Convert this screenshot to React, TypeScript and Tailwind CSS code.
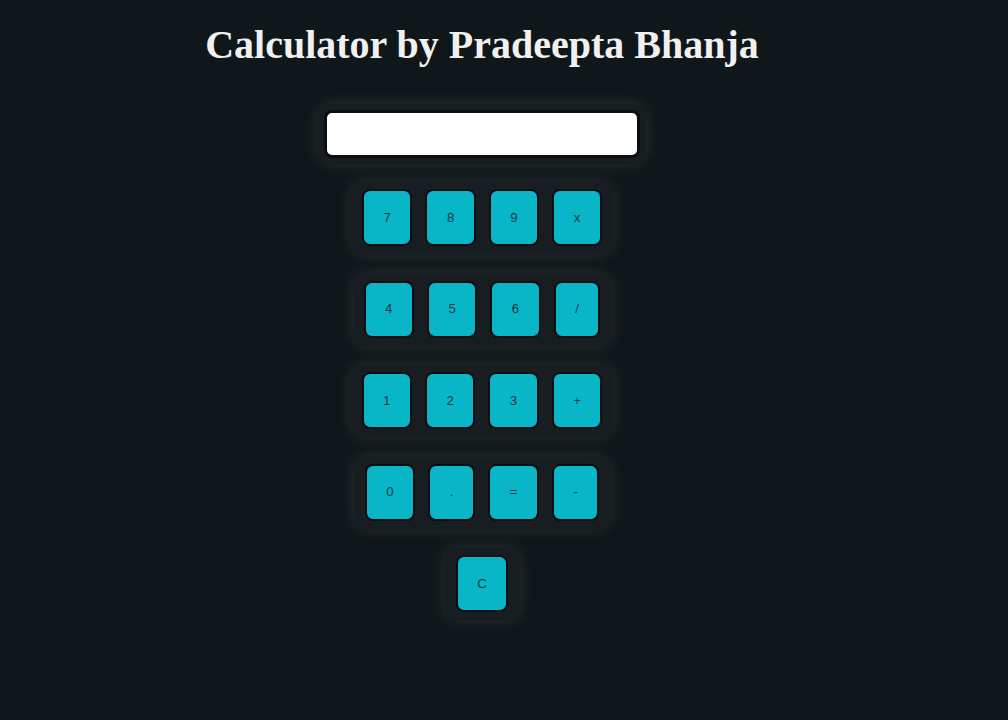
const rows = [
  ['7', '8', '9', 'x'],
  ['4', '5', '6', '/'],
  ['1', '2', '3', '+'],
  ['0', '.', '=', '-'],
]

function Key({ label }: { label: string }) {
  return (
    <button className="h-[57px] px-[19.5px] rounded-[8px] border-2 border-[#0a0e10] bg-[#09b6c7] text-[13.3px] text-[#163840] font-['Liberation_Sans',Arial,sans-serif]">
      {label}
    </button>
  )
}

function Row({ keys }: { keys: string[] }) {
  return (
    <div className="flex gap-[13px] px-[11px] pt-[7px] pb-[8px] rounded-[14px] bg-[#171d20] shadow-[0_0_16px_rgba(255,255,255,0.11)]">
      {keys.map((k) => (
        <Key key={k} label={k} />
      ))}
    </div>
  )
}

export default function App() {
  return (
    <div className="min-h-[720px] w-full bg-[#0f171a]">
      <div className="w-[964px] flex flex-col items-center">
        <h1 className="pt-[22px] text-[40px] font-bold leading-[46px] text-[#f0f0f0] font-['Liberation_Serif','Times_New_Roman',serif]">
          Calculator by Pradeepta Bhanja
        </h1>

        <div className="mt-[36px] p-[6px] rounded-[14px] bg-[#171d20] shadow-[0_0_16px_rgba(255,255,255,0.11)]">
          <input
            type="text"
            className="block w-[316px] h-[48px] rounded-[8px] border-[3px] border-[#0a0e10] bg-white outline-none"
          />
        </div>

        <div className="mt-[18px] flex flex-col items-center gap-[19.5px]">
          {rows.map((r, i) => (
            <Row key={i} keys={r} />
          ))}
          <div className="px-[12px] pt-[7px] pb-[8px] rounded-[14px] bg-[#171d20] shadow-[0_0_16px_rgba(255,255,255,0.11)]">
            <Key label="C" />
          </div>
        </div>
      </div>
    </div>
  )
}
